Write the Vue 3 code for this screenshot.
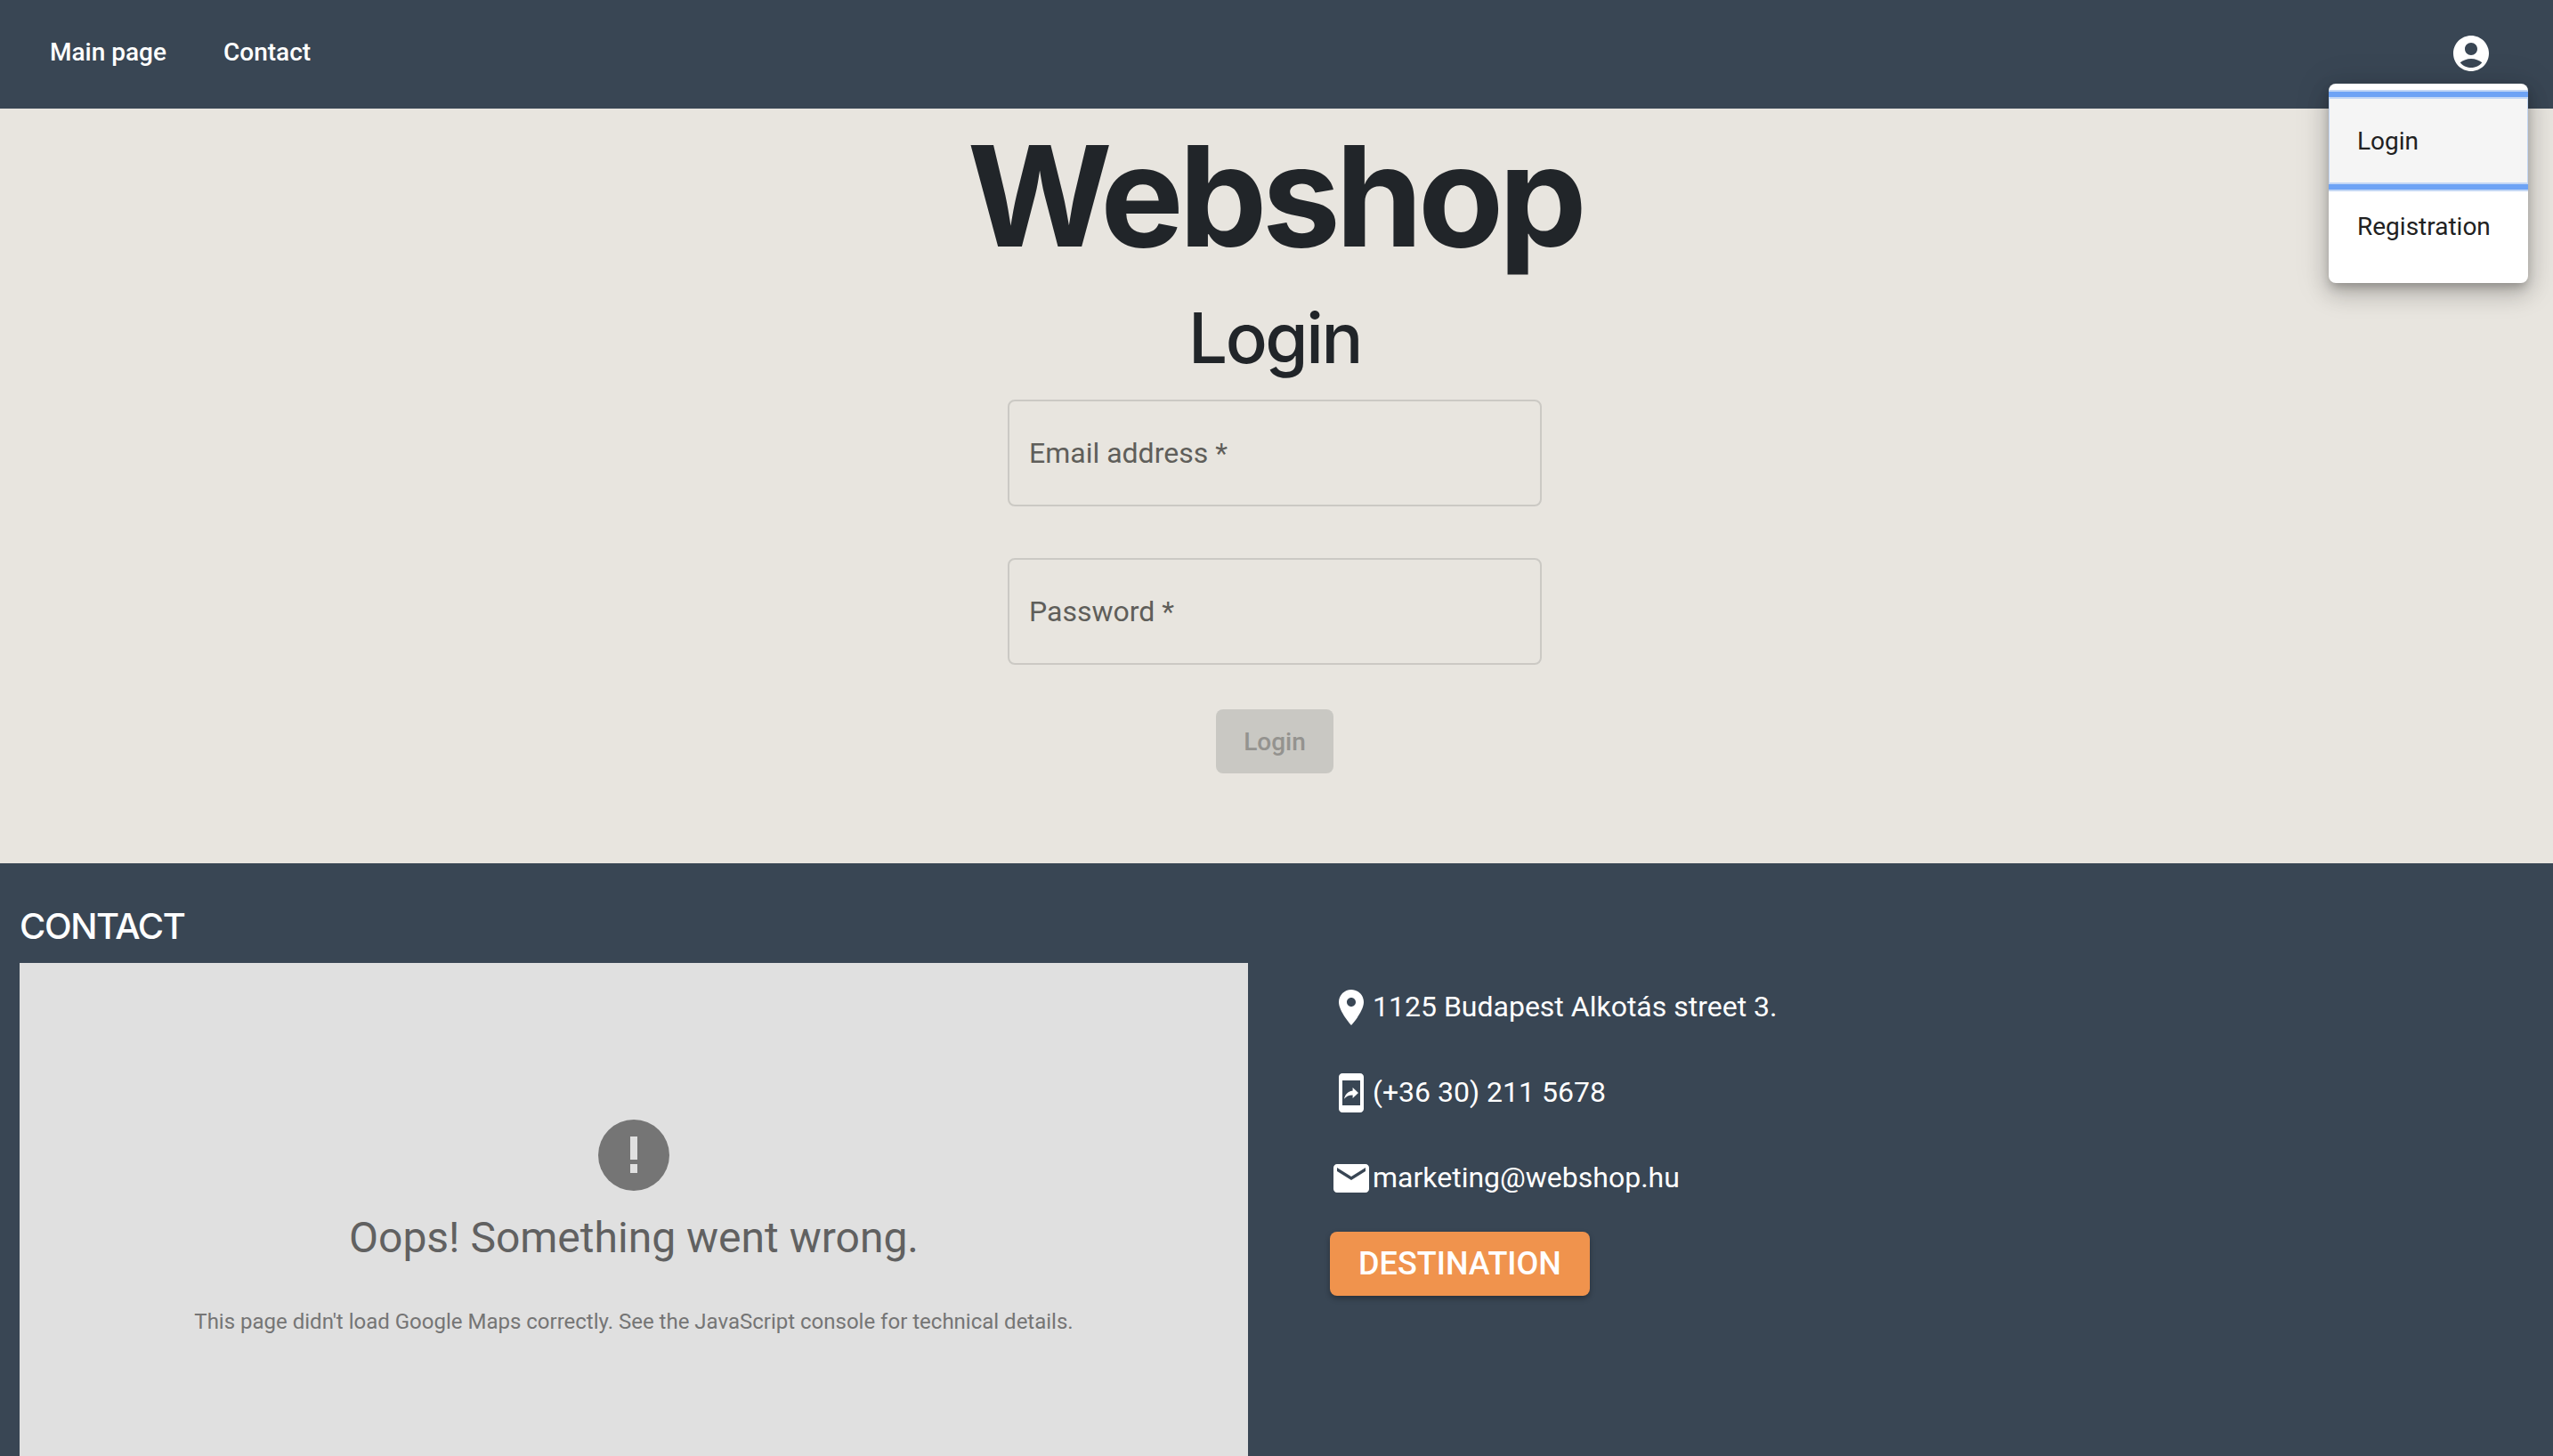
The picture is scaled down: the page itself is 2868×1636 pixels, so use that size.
<script setup>
const fields = ['Email address *', 'Password *']
const menuItems = ['Login', 'Registration']
</script>

<template>
  <div class="page">
    <nav class="nav">
      <a class="nav-link">Main page</a>
      <a class="nav-link">Contact</a>
      <svg class="account" viewBox="0 0 24 24"><path d="M12 2C6.48 2 2 6.48 2 12s4.48 10 10 10 10-4.48 10-10S17.52 2 12 2zm0 4c1.93 0 3.5 1.57 3.5 3.5S13.93 13 12 13s-3.5-1.57-3.5-3.5S10.07 6 12 6zm0 14c-2.03 0-4.43-.82-6.14-2.88C7.55 15.8 9.68 15 12 15s4.45.8 6.14 2.12C16.43 19.18 14.03 20 12 20z" /></svg>
      <ul class="menu">
        <li v-for="(item, i) in menuItems" :key="item" class="menu-item" :class="{ focused: i === 0 }">{{ item }}</li>
      </ul>
    </nav>

    <main class="main">
      <h1 class="title">Webshop</h1>
      <h2 class="subtitle">Login</h2>
      <div v-for="f in fields" :key="f" class="field"><span>{{ f }}</span></div>
      <button class="submit" disabled>Login</button>
    </main>

    <footer class="footer">
      <h3 class="footer-title">CONTACT</h3>
      <div class="footer-body">
        <div class="map">
          <svg class="map-icon" viewBox="0 0 80 80">
            <circle cx="40" cy="40" r="40" fill="#757575" />
            <rect x="36" y="19" width="8" height="26" fill="#e0e0e0" />
            <rect x="36" y="50" width="8" height="10" fill="#e0e0e0" />
          </svg>
          <div class="map-head">Oops! Something went wrong.</div>
          <div class="map-text">This page didn't load Google Maps correctly. See the JavaScript console for technical details.</div>
        </div>
        <div class="info">
          <div class="info-row">
            <svg viewBox="0 0 24 24"><path d="M12 2C8.13 2 5 5.13 5 9c0 5.25 7 13 7 13s7-7.75 7-13c0-3.87-3.13-7-7-7zm0 9.5c-1.38 0-2.5-1.12-2.5-2.5s1.12-2.5 2.5-2.5 2.5 1.12 2.5 2.5-1.12 2.5-2.5 2.5z" /></svg>
            <span>1125 Budapest Alkotás street 3.</span>
          </div>
          <div class="info-row">
            <svg viewBox="0 0 24 24"><path d="M17 1.01 7 1c-1.1 0-2 .9-2 2v18c0 1.1.9 2 2 2h10c1.1 0 2-.9 2-2V3c0-1.1-.9-1.99-2-1.99zM17 19H7V5h10v14zm-4.2-5.76v1.75L16 12l-3.2-2.98v1.7c-3.11.43-4.35 2.56-4.8 4.7 1.11-1.5 2.58-2.18 4.8-2.18z" /></svg>
            <span>(+36 30) 211 5678</span>
          </div>
          <div class="info-row">
            <svg viewBox="0 0 24 24"><path d="M20 4H4c-1.1 0-1.99.9-1.99 2L2 18c0 1.1.9 2 2 2h16c1.1 0 2-.9 2-2V6c0-1.1-.9-2-2-2zm0 4-8 5-8-5V6l8 5 8-5v2z" /></svg>
            <span>marketing@webshop.hu</span>
          </div>
          <button class="dest">DESTINATION</button>
        </div>
      </div>
    </footer>
  </div>
</template>

<style>
html, body { margin: 0; overflow: hidden; }
</style>

<style scoped>
.page { height: 1636px; display: flex; flex-direction: column; overflow: hidden; font-family: Roboto, sans-serif; background: #394654; }

.nav { position: relative; height: 122px; flex: none; display: flex; align-items: center; gap: 64px; padding: 0 56px; box-sizing: border-box; background: #394654; }
.nav-link { font-size: 28px; font-weight: 500; color: #fff; padding-bottom: 6px; }
.account { width: 48px; height: 48px; fill: #fff; margin-left: auto; margin-right: 12px; margin-bottom: 2px; }

.menu { position: absolute; top: 94px; right: 28px; width: 224px; height: 224px; margin: 0; padding: 16px 0; box-sizing: border-box; list-style: none; overflow: hidden; background: #fff; border-radius: 8px; box-shadow: 0 6px 12px -2px rgba(0,0,0,.25), 0 12px 24px 2px rgba(0,0,0,.14), 0 4px 36px 6px rgba(0,0,0,.1); z-index: 5; }
.menu-item { height: 96px; display: flex; align-items: center; padding-left: 32px; font-size: 28px; color: #212121; position: relative; }
.menu-item.focused { background: #f5f5f5; z-index: 1; box-shadow: inset 0 0 0 1px #c3d7f5, 0 0 0 1px #c3d7f5, 0 0 0 7px #6ea3f5, 0 0 0 9px #c3d7f5; }

.main { height: 848px; flex: none; display: flex; flex-direction: column; align-items: center; padding: 2px 4px 0 0; background: #e8e5df; box-sizing: border-box; }
.title { margin: 0; font-family: Inter, sans-serif; font-size: 157px; font-weight: 700; line-height: 192px; letter-spacing: -5.4px; color: #212529; }
.subtitle { margin: 16px 0 21px; font-family: Inter, sans-serif; font-size: 78px; font-weight: 500; line-height: 96px; letter-spacing: -2.4px; color: #212529; }
.field { width: 600px; height: 120px; margin-bottom: 58px; padding-left: 22px; box-sizing: border-box; display: flex; align-items: center; border: 2px solid #cbc9c4; border-radius: 8px; font-size: 32px; color: #5f5e5a; }
.submit { width: 132px; height: 72px; margin-top: -8px; border: 0; border-radius: 8px; background: #c9c8c3; color: #94938f; font-family: Roboto, sans-serif; font-size: 28px; font-weight: 500; }

.footer { flex: 1; min-height: 0; padding: 0 22px; color: #fff; }
.footer-title { margin: 0; height: 112px; padding-top: 47px; box-sizing: border-box; font-family: Inter, sans-serif; font-size: 40px; font-weight: 500; line-height: 48px; letter-spacing: -1.4px; }
.footer-body { display: flex; gap: 92px; }

.map { width: 1380px; height: 554px; flex: none; display: flex; flex-direction: column; align-items: center; background: #e0e0e0; }
.map-icon { width: 80px; height: 80px; margin-top: 176px; }
.map-head { margin-top: 21px; font-size: 48px; line-height: 64px; color: #616161; }
.map-text { margin-top: 44px; font-size: 24px; line-height: 36px; color: #757575; }

.info { padding-top: 26px; display: flex; flex-direction: column; align-items: flex-start; }
.info-row { display: flex; align-items: center; height: 48px; margin-bottom: 48px; font-size: 32px; }
.info-row svg { width: 48px; height: 48px; fill: #fff; flex: none; }
.info-row span { padding-bottom: 2px; }
.dest { width: 292px; height: 72px; margin-top: -12px; border: 0; border-radius: 8px; background: #f0934d; color: #fff; font-family: Roboto, sans-serif; font-size: 36px; font-weight: 500; box-shadow: 0 3px 6px rgba(0,0,0,.3); }
</style>
